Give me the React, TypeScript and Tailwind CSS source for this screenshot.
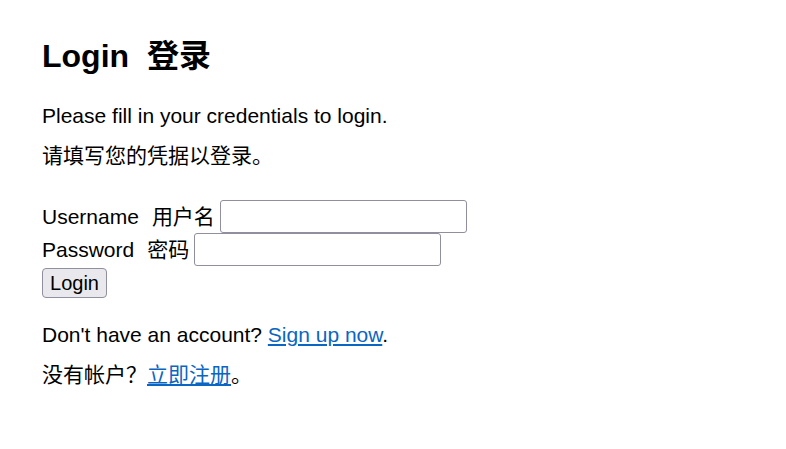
const font = {
  fontFamily: '"Liberation Sans", Arial, "Noto Sans CJK SC", sans-serif',
};

export default function App() {
  return (
    <div className="min-h-screen bg-white pl-[42px] pt-[38px] text-black" style={font}>
      <h2 className="mb-[30px] text-[32px] font-bold leading-[36px]">
        Login<span className="ml-[18px]">登录</span>
      </h2>
      <p className="text-[21px] leading-[24px]">Please fill in your credentials to login.</p>
      <p className="mt-[16px] text-[21px] leading-[24px]">请填写您的凭据以登录。</p>

      <form className="mt-[32px] text-[21px]" onSubmit={(e) => e.preventDefault()}>
        <div className="flex h-[33px] items-center">
          <label>Username</label>
          <span className="ml-[13px]">用户名</span>
          <input
            type="text"
            className="ml-[5px] h-[33px] w-[247px] rounded-[3px] border border-[#8f8f9d] bg-white px-[3px]"
          />
        </div>
        <div className="flex h-[33px] items-center">
          <label>Password</label>
          <span className="ml-[13px]">密码</span>
          <input
            type="password"
            className="ml-[5px] h-[33px] w-[247px] rounded-[3px] border border-[#8f8f9d] bg-white px-[3px]"
          />
        </div>
        <button
          type="submit"
          className="mt-[2px] h-[30px] w-[65px] rounded-[4px] border border-[#8f8f9d] bg-[#e9e9ed] text-[20px] leading-none"
        >
          Login
        </button>
      </form>

      <p className="mt-[24px] text-[21px] leading-[24px]">
        Don't have an account?{" "}
        <a href="#" className="text-[#0a66c2] underline">
          Sign up now
        </a>
        .
      </p>
      <p className="mt-[16px] text-[21px] leading-[24px]">
        没有帐户？
        <a href="#" className="text-[#0a66c2] underline">
          立即注册
        </a>
        。
      </p>
    </div>
  );
}
